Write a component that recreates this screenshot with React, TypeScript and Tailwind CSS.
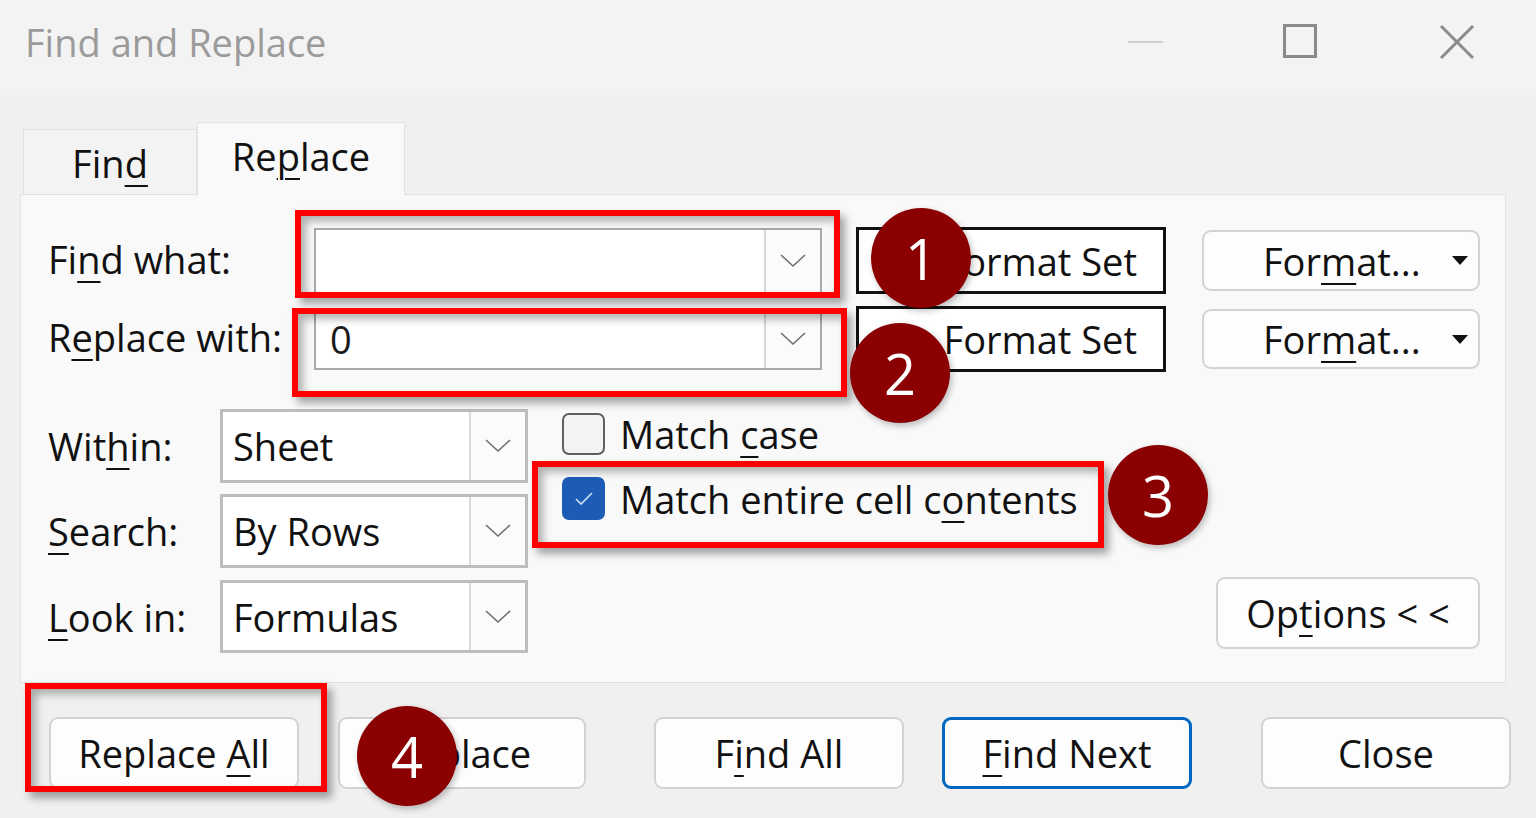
import React from 'react';

const FONT = { fontFamily: '"Open Sans", "Noto Sans", sans-serif' };

function Key({ children }: { children: React.ReactNode }) {
  return <span className="underline decoration-[2px] underline-offset-[7px]">{children}</span>;
}

function Chevron() {
  return (
    <svg width="26" height="14" viewBox="0 0 26 14" fill="none">
      <polyline points="1,1 13,12 25,1" stroke="#6e6e6e" strokeWidth="1.6" />
    </svg>
  );
}

function Combo({ value, h }: { value?: string; h: string }) {
  return (
    <div className={`flex w-[508px] ${h} border-2 border-[#a9a9a9] bg-white`}>
      <div className="flex flex-1 items-center pl-[14px] text-[38px] leading-none text-[#1a1a1a]">{value}</div>
      <div className="flex w-[56px] items-center justify-center border-l-2 border-[#d6d6d6] bg-[#fbfbfb]">
        <Chevron />
      </div>
    </div>
  );
}

function Select({ value, h }: { value: string; h: string }) {
  return (
    <div className={`flex w-[308px] ${h} border-[3px] border-[#bdbdbd] bg-white`}>
      <div className="flex flex-1 items-center pl-[10px] text-[38px] leading-none text-[#111]">{value}</div>
      <div className="flex w-[56px] items-center justify-center border-l-2 border-[#dadada] bg-[#fbfbfb]">
        <Chevron />
      </div>
    </div>
  );
}

function FormatSet({ h }: { h: string }) {
  return (
    <div className={`ml-[34px] flex w-[310px] ${h} items-center justify-end border-[3px] border-[#111] bg-white pr-[26px] text-[38px] leading-none text-[#111]`}>
      Format Set
    </div>
  );
}

function FormatBtn({ h }: { h: string }) {
  return (
    <div className={`ml-[36px] flex w-[278px] ${h} items-center rounded-[9px] border-2 border-[#d3d3d3] bg-[#fdfdfd] text-[38px] leading-none text-[#111]`}>
      <span className="ml-[59px]">For<Key>m</Key>at...</span>
      <svg className="ml-auto mr-[10px]" width="16" height="9" viewBox="0 0 16 9">
        <polygon points="0,0 16,0 8,9" fill="#111" />
      </svg>
    </div>
  );
}

function Btn({ children, cls, primary }: { children: React.ReactNode; cls: string; primary?: boolean }) {
  return (
    <div
      className={`${cls} flex h-[72px] items-center justify-center rounded-[9px] bg-[#fdfdfd] text-[38px] leading-none text-[#111] ${
        primary ? 'border-[3px] border-[#0067c0]' : 'border-2 border-[#d3d3d3]'
      }`}
    >
      {children}
    </div>
  );
}

function Badge({ n, cls }: { n: string; cls: string }) {
  return (
    <div className={`absolute ${cls} flex h-[100px] w-[100px] items-center justify-center rounded-full bg-[#8b0000] text-[56px] leading-none text-white shadow-[2px_3px_6px_rgba(0,0,0,0.25)]`}>
      {n}
    </div>
  );
}

const RED = 'absolute border-[6px] border-[#ff0000] shadow-[5px_6px_8px_rgba(0,0,0,0.35),inset_5px_5px_8px_rgba(0,0,0,0.3)]';

export default function App() {
  return (
    <div className="relative flex h-[818px] w-[1536px] flex-col overflow-hidden bg-[#f0f0f0]" style={FONT}>
      {/* title bar */}
      <div className="flex h-[95px] shrink-0 items-start bg-[#f3f3f3]">
        <div className="ml-[25px] mt-[23px] text-[38px] leading-none text-[#9b9b9b]">Find and Replace</div>
        <div className="ml-auto mt-[24px] flex items-start">
          <div className="mt-[17px] h-[2px] w-[35px] bg-[#cfcfcf]" />
          <div className="ml-[120px] h-[34px] w-[34px] border-[3px] border-[#8a8a8a]" />
          <svg className="ml-[122px] mr-[61px]" width="36" height="36" viewBox="0 0 36 36">
            <line x1="2" y1="2" x2="34" y2="34" stroke="#8a8a8a" strokeWidth="3" />
            <line x1="34" y1="2" x2="2" y2="34" stroke="#8a8a8a" strokeWidth="3" />
          </svg>
        </div>
      </div>

      <div className="flex flex-col px-[20px] pt-[27px]">
        {/* tabs */}
        <div className="flex h-[72px] items-end">
          <div className="ml-[3px] flex h-[65px] w-[174px] items-center justify-center border-l border-r border-t border-[#e2e2e2] bg-[#f3f3f3] pt-[2px] text-[38px] leading-none text-[#111]">
            <span>Fin<Key>d</Key></span>
          </div>
          <div className="relative z-10 -mb-px flex h-[73px] w-[208px] items-center justify-center border-l border-r border-t border-[#e2e2e2] bg-[#f9f9f9] pb-[6px] text-[38px] leading-none text-[#111]">
            <span>Re<Key>p</Key>lace</span>
          </div>
        </div>

        {/* panel */}
        <div className="flex h-[489px] w-[1486px] flex-col border border-[#e2e2e2] bg-[#f9f9f9] pl-[27px] pr-[25px] pt-[32px]">
          <div className="flex h-[67px] items-center">
            <div className="w-[266px] pb-[4px] text-[38px] leading-none text-[#111]">Fi<Key>n</Key>d what:</div>
            <Combo h="h-[66px]" />
            <FormatSet h="h-[67px]" />
            <FormatBtn h="h-[61px]" />
          </div>
          <div className="mt-[12px] flex h-[66px] items-center">
            <div className="w-[266px] pb-[4px] text-[38px] leading-none text-[#111]">R<Key>e</Key>place with:</div>
            <Combo h="h-[62px]" value="0" />
            <FormatSet h="h-[66px]" />
            <FormatBtn h="h-[60px]" />
          </div>

          <div className="mt-[37px] flex h-[244px]">
            <div className="flex w-[480px] flex-col">
              <div className="flex h-[74px] items-center">
                <div className="w-[172px] text-[38px] leading-none text-[#111]">Wit<Key>h</Key>in:</div>
                <Select value="Sheet" h="h-[74px]" />
              </div>
              <div className="mt-[11px] flex h-[74px] items-center">
                <div className="w-[172px] text-[38px] leading-none text-[#111]"><Key>S</Key>earch:</div>
                <Select value="By Rows" h="h-[74px]" />
              </div>
              <div className="mt-[12px] flex h-[73px] items-center">
                <div className="w-[172px] text-[38px] leading-none text-[#111]"><Key>L</Key>ook in:</div>
                <Select value="Formulas" h="h-[73px]" />
              </div>
            </div>
            <div className="ml-[34px] flex flex-1 flex-col">
              <div className="mt-[4px] flex h-[42px] items-center">
                <div className="h-[42px] w-[43px] rounded-[7px] border-2 border-[#5f5f5f] bg-[#f3f3f3]" />
                <div className="ml-[15px] text-[38px] leading-none text-[#111]">Match <Key>c</Key>ase</div>
              </div>
              <div className="mt-[22px] flex h-[43px] items-center">
                <div className="flex h-[43px] w-[43px] items-center justify-center rounded-[7px] bg-[#1d5cb6]">
                  <svg width="20" height="16" viewBox="0 0 20 16" fill="none">
                    <polyline points="2,8 7,13 18,2" stroke="#cfe0f7" strokeWidth="1.6" />
                  </svg>
                </div>
                <div className="ml-[15px] text-[38px] leading-none text-[#111]">Match entire cell c<Key>o</Key>ntents</div>
              </div>
              <div className="mb-[4px] mt-auto flex h-[72px] w-[264px] items-center justify-center self-end rounded-[9px] border-2 border-[#d3d3d3] bg-[#fdfdfd] text-[38px] leading-none text-[#111]">
                <span>Op<Key>t</Key>ions &lt; &lt;</span>
              </div>
            </div>
          </div>
        </div>

        {/* bottom buttons */}
        <div className="mt-[34px] flex">
          <Btn cls="ml-[29px] w-[250px]"><span>Replace <Key>A</Key>ll</span></Btn>
          <Btn cls="ml-[39px] w-[248px]"><span><Key>R</Key>eplace</span></Btn>
          <Btn cls="ml-[68px] w-[250px]"><span>F<Key>i</Key>nd All</span></Btn>
          <Btn cls="ml-[38px] w-[250px]" primary><span><Key>F</Key>ind Next</span></Btn>
          <Btn cls="ml-[69px] w-[250px]"><span>Close</span></Btn>
        </div>
      </div>

      {/* annotations */}
      <div className={`${RED} left-[295px] top-[210px] h-[88px] w-[545px]`} />
      <div className={`${RED} left-[292px] top-[308px] h-[89px] w-[555px]`} />
      <div className={`${RED} left-[532px] top-[461px] h-[87px] w-[572px]`} />
      <div className={`${RED} left-[25px] top-[683px] h-[109px] w-[302px]`} />
      <Badge n="1" cls="left-[871px] top-[208px]" />
      <Badge n="2" cls="left-[850px] top-[323px]" />
      <Badge n="3" cls="left-[1108px] top-[445px]" />
      <Badge n="4" cls="left-[357px] top-[706px]" />
    </div>
  );
}
